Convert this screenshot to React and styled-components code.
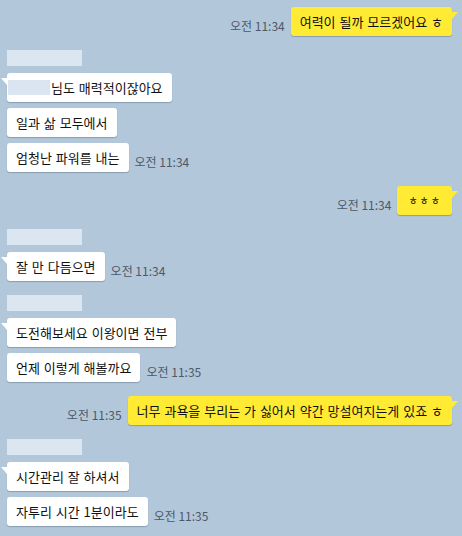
import styled, { createGlobalStyle, css } from "styled-components";

const GlobalStyle = createGlobalStyle`
  html, body {
    margin: 0;
    padding: 0;
    background: #b2c7d9;
  }
  body {
    font-family: "Noto Sans CJK KR", "Noto Sans", sans-serif;
  }
`;

const Chat = styled.div`
  width: 462px;
  height: 536px;
  box-sizing: border-box;
  padding: 7px 10px 0 7px;
  display: flex;
  flex-direction: column;
  gap: 14px;
  overflow: hidden;
  background: #b2c7d9;
`;

const Group = styled.div`
  display: flex;
  flex-direction: column;
  align-items: ${(p) => (p.mine ? "flex-end" : "flex-start")};
  gap: 6px;
`;

const Name = styled.div`
  width: 75px;
  height: 16px;
  background: #dce6f1;
  margin-bottom: 1px;
`;

const Row = styled.div`
  display: flex;
  align-items: flex-end;
  gap: 6px;
  flex-direction: ${(p) => (p.mine ? "row-reverse" : "row")};
`;

const Bubble = styled.div`
  position: relative;
  height: 29px;
  box-sizing: border-box;
  padding: 0 9px;
  display: flex;
  align-items: center;
  font-size: 13px;
  line-height: 17px;
  word-spacing: 1px;
  color: #111;
  white-space: nowrap;
  border-radius: 3px;
  background: ${(p) => (p.mine ? "#ffeb33" : "#ffffff")};
  box-shadow: 0 1px 1px rgba(60, 80, 100, 0.35);

  ${(p) =>
    p.tail &&
    !p.mine &&
    css`
      &::before {
        content: "";
        position: absolute;
        left: -6px;
        top: 5px;
        border-top: 7px solid #ffffff;
        border-left: 6px solid transparent;
      }
    `}

  ${(p) =>
    p.tail &&
    p.mine &&
    css`
      &::before {
        content: "";
        position: absolute;
        right: -6px;
        top: 5px;
        border-top: 7px solid #ffeb33;
        border-right: 6px solid transparent;
      }
    `}
`;

const Hidden = styled.span`
  display: inline-block;
  width: 42px;
  height: 15px;
  margin-left: -8px;
  margin-right: 1px;
  background: #dbe5f1;
`;

const Time = styled.span`
  font-size: 12px;
  line-height: 14px;
  color: #4e5866;
  white-space: nowrap;
  margin-bottom: 3px;
`;

const Jamo = styled.span`
  font-size: 10px;
  letter-spacing: 2px;
  padding: 0 1px 0 2px;
`;

const Msg = ({ mine, tail, time, children }) => (
  <Row mine={mine}>
    <Bubble mine={mine} tail={tail}>
      {children}
    </Bubble>
    {time && <Time>{time}</Time>}
  </Row>
);

export default function App() {
  return (
    <>
      <GlobalStyle />
      <Chat>
        <Group mine>
          <Msg mine tail time="오전 11:34">
            여력이 될까 모르겠어요 ㅎ
          </Msg>
        </Group>

        <Group>
          <Name />
          <Msg tail>
            <Hidden />
            님도 매력적이잖아요
          </Msg>
          <Msg>일과 삶 모두에서</Msg>
          <Msg time="오전 11:34">엄청난 파워를 내는</Msg>
        </Group>

        <Group mine>
          <Msg mine tail time="오전 11:34">
            <Jamo>ㅎㅎㅎ</Jamo>
          </Msg>
        </Group>

        <Group>
          <Name />
          <Msg tail time="오전 11:34">
            잘 만 다듬으면
          </Msg>
        </Group>

        <Group>
          <Name />
          <Msg tail>도전해보세요 이왕이면 전부</Msg>
          <Msg time="오전 11:35">언제 이렇게 해볼까요</Msg>
        </Group>

        <Group mine>
          <Msg mine tail time="오전 11:35">
            너무 과욕을 부리는 가 싫어서 약간 망설여지는게 있죠 ㅎ
          </Msg>
        </Group>

        <Group>
          <Name />
          <Msg tail>시간관리 잘 하셔서</Msg>
          <Msg time="오전 11:35">자투리 시간 1분이라도</Msg>
        </Group>
      </Chat>
    </>
  );
}
